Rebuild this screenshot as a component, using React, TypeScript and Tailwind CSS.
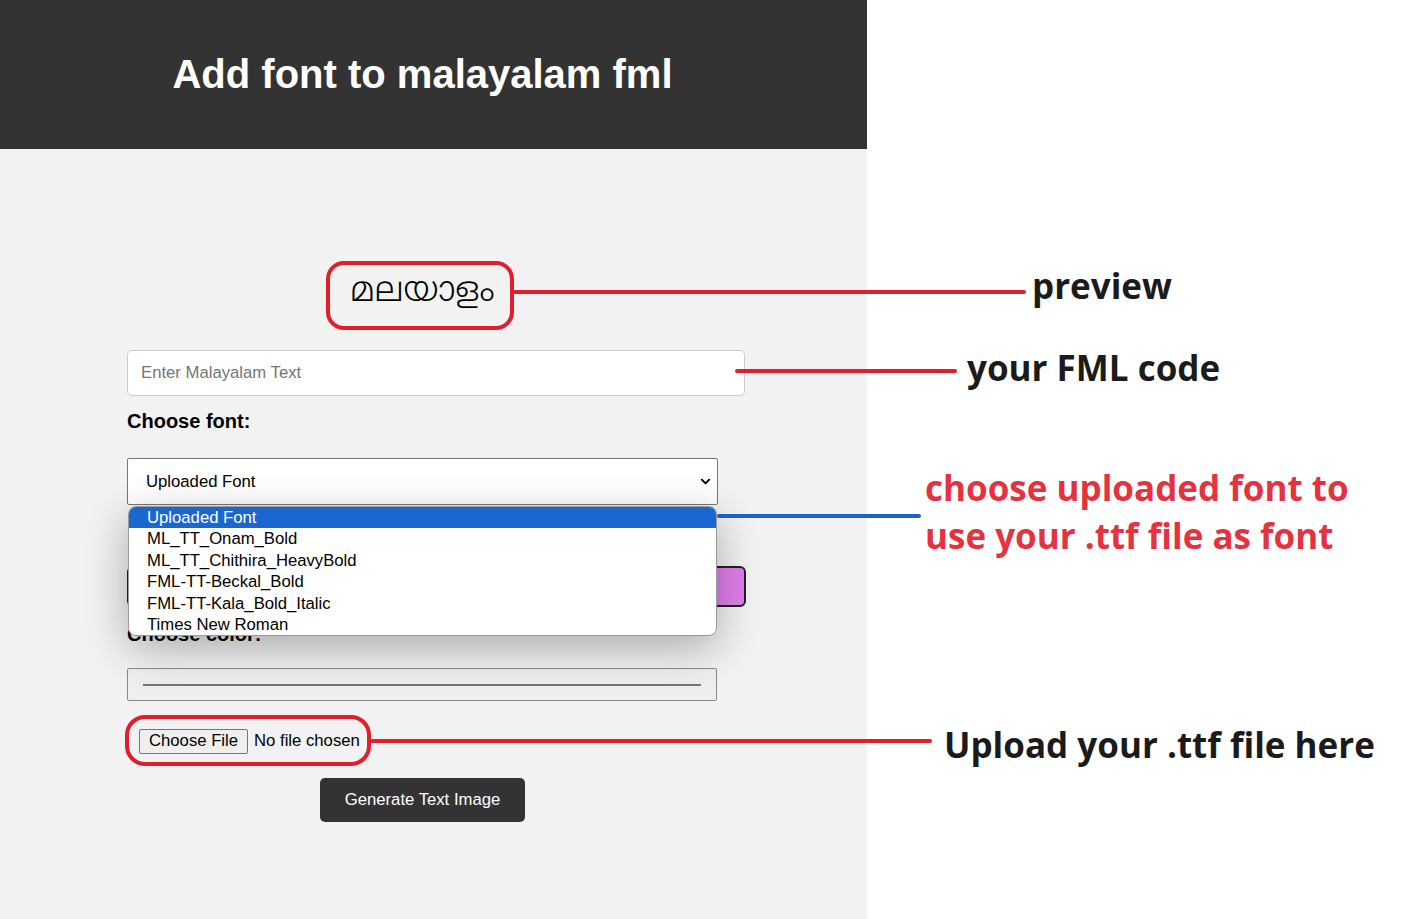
import { ChevronDown } from "lucide-react";

const fontOptions = [
  "Uploaded Font",
  "ML_TT_Onam_Bold",
  "ML_TT_Chithira_HeavyBold",
  "FML-TT-Beckal_Bold",
  "FML-TT-Kala_Bold_Italic",
  "Times New Roman",
];

// Red/blue callout lines and labels drawn over the screenshot
function Annotations() {
  const note = "absolute font-['Open_Sans',sans-serif] font-bold text-[35px] whitespace-nowrap";
  return (
    <>
      <div className="absolute left-[326px] top-[261px] w-[188px] h-[69px] border-[4px] border-[#e31e2b] rounded-[18px]" />
      <div className="absolute left-[513px] top-[290px] w-[513px] h-[4px] bg-[#e31e2b] rounded-full" />
      <div className={`${note} leading-none left-[1032px] top-[268px] text-[#1b1b1b]`}>preview</div>

      <div className="absolute left-[735px] top-[369px] w-[222px] h-[4px] bg-[#e31e2b] rounded-full" />
      <div className={`${note} leading-none left-[967px] top-[350px] text-[#1b1b1b]`}>your FML code</div>

      <div className="absolute left-[717px] top-[514px] w-[204px] h-[4px] bg-[#1b64d0] rounded-full" />
      <div className={`${note} leading-[48px] left-[925px] top-[464px] text-[#e5323f]`}>
        choose uploaded font to
        <br />
        use your .ttf file as font
      </div>

      <div className="absolute left-[125px] top-[715px] w-[246px] h-[51px] border-[4px] border-[#e31e2b] rounded-[20px]" />
      <div className="absolute left-[370px] top-[739px] w-[562px] h-[4px] bg-[#e31e2b] rounded-full" />
      <div className={`${note} leading-none left-[944px] top-[727px] text-[#1b1b1b]`}>Upload your .ttf file here</div>
    </>
  );
}

export default function App() {
  return (
    <div className="relative w-full h-[919px] bg-white overflow-hidden font-['Liberation_Sans',Arial,sans-serif] text-black">
      <div className="w-[867px] h-full bg-[#f2f2f2]">
        <header className="h-[149px] bg-[#333333]">
          <h1 className="ml-[127px] w-[591px] pt-[54px] text-center text-[40px] leading-none font-bold text-white whitespace-nowrap">
            Add font to malayalam fml
          </h1>
        </header>

        <main className="ml-[127px] w-[591px] flex flex-col text-[16.7px]">
          <div className="mt-[114px] h-[60px] flex items-center justify-center text-[35px] font-light font-['Noto_Sans_Malayalam','Noto_Sans',sans-serif]">
            മലയാളം
          </div>

          <input
            className="mt-[27px] w-[618px] h-[46px] px-[13px] bg-white border border-[#cccccc] rounded-[5px] placeholder:text-[#757575] outline-none"
            placeholder="Enter Malayalam Text"
          />

          <label className="mt-[14px] text-[20px] leading-[23px] font-bold">Choose font:</label>

          <div className="relative mt-[25px] w-[591px]">
            <div className="h-[47px] flex items-center justify-between pl-[18px] pr-[4px] bg-white border border-[#767676] rounded-[2px]">
              <span>Uploaded Font</span>
              <ChevronDown className="w-[15px] h-[15px]" strokeWidth={3} />
            </div>

            {/* open select list */}
            <ul className="absolute z-10 left-[1px] top-[48px] w-[589px] bg-white border border-[#9a9a9a] rounded-[8px] overflow-hidden shadow-[0_12px_44px_rgba(0,0,0,0.3)] leading-[21.4px]">
              {fontOptions.map((name, i) => (
                <li
                  key={name}
                  className={i === 0 ? "pl-[18px] bg-[#1a67d2] text-white" : "pl-[18px]"}
                >
                  {name}
                </li>
              ))}
            </ul>
          </div>

          <div className="mt-[61px] w-[619px] h-[41px] border-2 border-[#222222] rounded-[6px] bg-[#df7fea]" />

          <label className="mt-[16px] text-[20px] leading-[23px] font-bold">Choose color:</label>

          <div className="mt-[22px] w-[590px] h-[33px] flex items-center px-[15px] bg-[#efefef] border border-[#8a8a8a] rounded-[2px]">
            <div className="w-full h-[2px] bg-[#777777]" />
          </div>

          <div className="mt-[17px] h-[46px] flex items-center pl-[12px]">
            <button className="h-[25px] px-[9px] bg-[#efefef] border border-[#767676] rounded-[2px] leading-none">
              Choose File
            </button>
            <span className="ml-[6px]">No file chosen</span>
          </div>

          <div className="mt-[14px] flex justify-center">
            <button className="w-[205px] h-[44px] bg-[#333333] text-white rounded-[5px]">
              Generate Text Image
            </button>
          </div>
        </main>
      </div>

      <Annotations />
    </div>
  );
}
